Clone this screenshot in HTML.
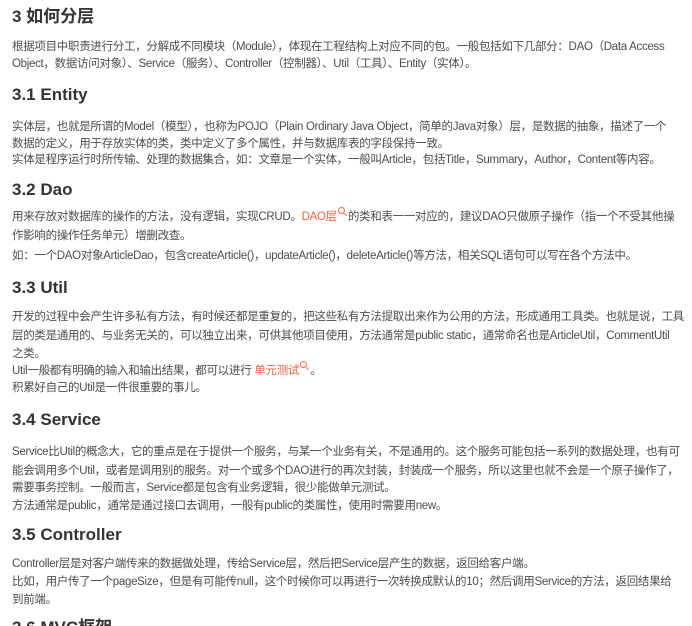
<!DOCTYPE html>
<html><head><meta charset="utf-8"><style>
html,body{margin:0;padding:0;background:#fff;width:692px;height:626px;overflow:hidden}
body{position:relative;font-family:"Liberation Sans","Noto Sans CJK SC",sans-serif}
.h{position:absolute;left:12px;font-size:17px;font-weight:bold;color:#333;white-space:nowrap;line-height:22px}
.p{position:absolute;left:12px;font-size:11.5px;color:#4d4d4d;white-space:nowrap;line-height:16px;letter-spacing:-0.3px}
.r{color:#f4623a}
.q{display:inline-block;width:5px;height:5px;border:1.2px solid #f4623a;border-radius:50%;position:relative;top:-6px;margin-left:1px;margin-right:3px}
.q:after{content:"";position:absolute;width:1.2px;height:3px;background:#f4623a;right:-2px;bottom:-3px;transform:rotate(-45deg)}
</style></head><body>
<div class="h" style="top:6px">3 如何分层</div>
<div class="p" style="top:39px">根据项目中职责进行分工，分解成不同模块（Module），体现在工程结构上对应不同的包。一般包括如下几部分：DAO（Data Access</div>
<div class="p" style="top:56px">Object，数据访问对象）、Service（服务）、Controller（控制器）、Util（工具）、Entity（实体）。</div>
<div class="h" style="top:84px">3.1 Entity</div>
<div class="p" style="top:119px">实体层，也就是所谓的Model（模型），也称为POJO（Plain Ordinary Java Object，简单的Java对象）层，是数据的抽象，描述了一个</div>
<div class="p" style="top:136px">数据的定义，用于存放实体的类，类中定义了多个属性，并与数据库表的字段保持一致。</div>
<div class="p" style="top:152px">实体是程序运行时所传输、处理的数据集合，如：文章是一个实体，一般叫Article，包括Title，Summary，Author，Content等内容。</div>
<div class="h" style="top:179px">3.2 Dao</div>
<div class="p" style="top:209px">用来存放对数据库的操作的方法，没有逻辑，实现CRUD。<span class="r">DAO层</span><span class="q"></span>的类和表一一对应的，建议DAO只做原子操作（指一个不受其他操</div>
<div class="p" style="top:228px">作影响的操作任务单元）增删改查。</div>
<div class="p" style="top:248px">如：一个DAO对象ArticleDao，包含createArticle()，updateArticle()，deleteArticle()等方法，相关SQL语句可以写在各个方法中。</div>
<div class="h" style="top:277px">3.3 Util</div>
<div class="p" style="top:309px">开发的过程中会产生许多私有方法，有时候还都是重复的，把这些私有方法提取出来作为公用的方法，形成通用工具类。也就是说，工具</div>
<div class="p" style="top:328px">层的类是通用的、与业务无关的，可以独立出来，可供其他项目使用，方法通常是public static，通常命名也是ArticleUtil，CommentUtil</div>
<div class="p" style="top:346px">之类。</div>
<div class="p" style="top:363px">Util一般都有明确的输入和输出结果，都可以进行 <span class="r">单元测试</span><span class="q"></span>。</div>
<div class="p" style="top:380px">积累好自己的Util是一件很重要的事儿。</div>
<div class="h" style="top:409px">3.4 Service</div>
<div class="p" style="top:444px">Service比Util的概念大，它的重点是在于提供一个服务，与某一个业务有关，不是通用的。这个服务可能包括一系列的数据处理，也有可</div>
<div class="p" style="top:463px">能会调用多个Util，或者是调用别的服务。对一个或多个DAO进行的再次封装，封装成一个服务，所以这里也就不会是一个原子操作了，</div>
<div class="p" style="top:480px">需要事务控制。一般而言，Service都是包含有业务逻辑，很少能做单元测试。</div>
<div class="p" style="top:498px">方法通常是public，通常是通过接口去调用，一般有public的类属性，使用时需要用new。</div>
<div class="h" style="top:524px">3.5 Controller</div>
<div class="p" style="top:556px">Controller层是对客户端传来的数据做处理，传给Service层，然后把Service层产生的数据，返回给客户端。</div>
<div class="p" style="top:574px">比如，用户传了一个pageSize，但是有可能传null，这个时候你可以再进行一次转换成默认的10；然后调用Service的方法，返回结果给</div>
<div class="p" style="top:592px">到前端。</div>
<div class="h" style="top:617px">3.6 MVC框架</div>
</body></html>
